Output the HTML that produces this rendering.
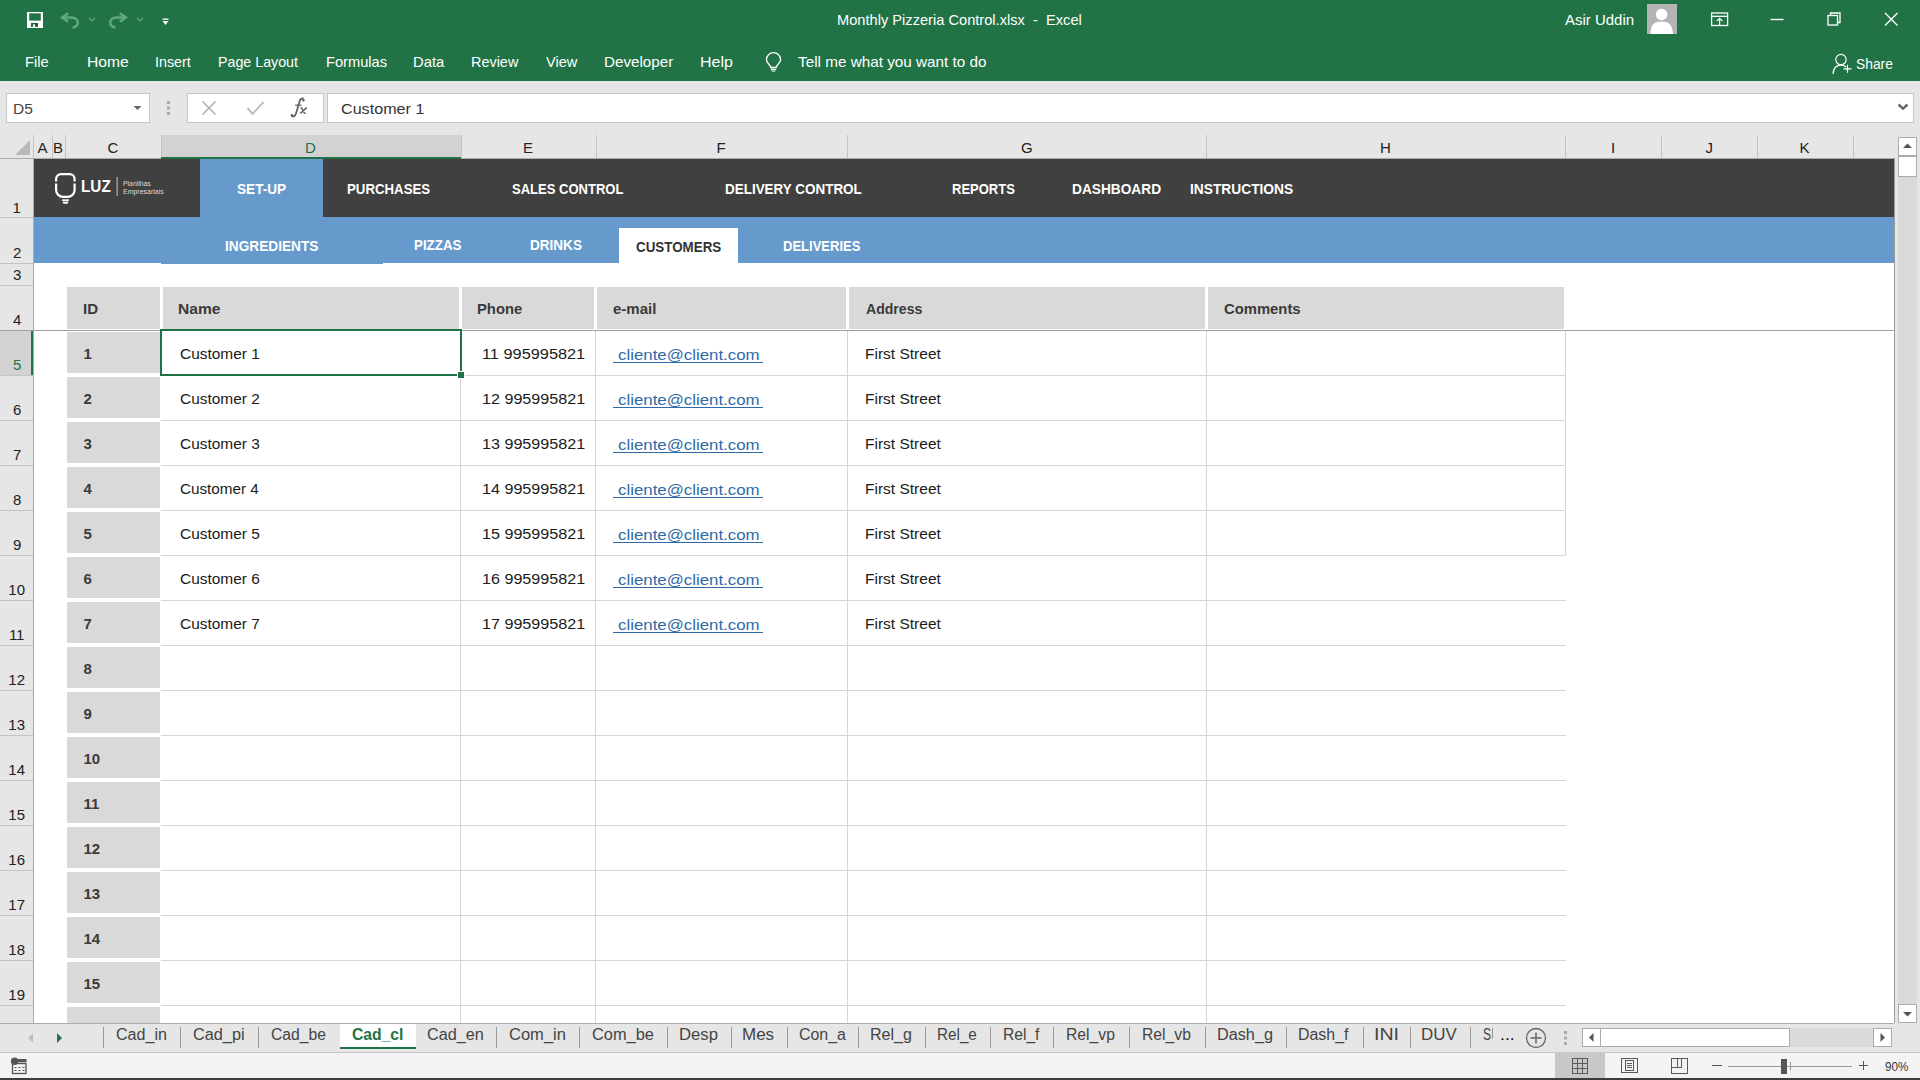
<!DOCTYPE html>
<html><head><meta charset="utf-8"><style>
html,body{margin:0;padding:0;width:1920px;height:1080px;overflow:hidden;background:#fff}
body{position:relative;font-family:"Liberation Sans", sans-serif}
div,svg{position:absolute}
span{position:absolute;white-space:pre;display:block}
</style></head><body>
<div style="left:0px;top:0px;width:1920px;height:81px;background:#217346;"></div>
<div style="left:0px;top:81px;width:1920px;height:54px;background:#e6e6e6;"></div>
<div style="left:6px;top:93px;width:144px;height:30px;background:#ffffff;box-sizing:border-box;border:1px solid #c6c6c6"></div>
<div style="left:187px;top:93px;width:137px;height:30px;background:#ffffff;box-sizing:border-box;border:1px solid #c6c6c6"></div>
<div style="left:327px;top:93px;width:1587px;height:30px;background:#ffffff;box-sizing:border-box;border:1px solid #c6c6c6"></div>
<div style="left:0px;top:135px;width:1894px;height:24px;background:#e6e6e6;"></div>
<div style="left:0px;top:158px;width:33px;height:865px;background:#e6e6e6;"></div>
<div style="left:161px;top:135px;width:300px;height:23px;background:#d2d2d2;"></div>
<div style="left:33px;top:135px;width:1px;height:23px;background:#c4c4c4;"></div>
<div style="left:52px;top:135px;width:1px;height:23px;background:#c4c4c4;"></div>
<div style="left:65px;top:135px;width:1px;height:23px;background:#c4c4c4;"></div>
<div style="left:161px;top:135px;width:1px;height:23px;background:#c4c4c4;"></div>
<div style="left:461px;top:135px;width:1px;height:23px;background:#c4c4c4;"></div>
<div style="left:596px;top:135px;width:1px;height:23px;background:#c4c4c4;"></div>
<div style="left:847px;top:135px;width:1px;height:23px;background:#c4c4c4;"></div>
<div style="left:1206px;top:135px;width:1px;height:23px;background:#c4c4c4;"></div>
<div style="left:1565px;top:135px;width:1px;height:23px;background:#c4c4c4;"></div>
<div style="left:1661px;top:135px;width:1px;height:23px;background:#c4c4c4;"></div>
<div style="left:1757px;top:135px;width:1px;height:23px;background:#c4c4c4;"></div>
<div style="left:1853px;top:135px;width:1px;height:23px;background:#c4c4c4;"></div>
<div style="left:0px;top:158px;width:33px;height:1px;background:#ababab;"></div>
<svg style="position:absolute;left:14px;top:139px" width="17" height="17"><polygon points="16,1 16,16 1,16" fill="#b9b9b9"/></svg>
<div style="left:33px;top:159px;width:1861px;height:864px;background:#ffffff;"></div>
<div style="left:33px;top:158px;width:1861px;height:1px;background:#ababab;"></div>
<div style="left:161px;top:157px;width:300px;height:2px;background:#217346;"></div>
<div style="left:33px;top:159px;width:1861px;height:58px;background:#404040;"></div>
<div style="left:200px;top:159px;width:123px;height:58px;background:#6699cc;"></div>
<div style="left:33px;top:217px;width:1861px;height:46px;background:#6699cc;"></div>
<div style="left:619px;top:228px;width:119px;height:35px;background:#ffffff;"></div>
<div style="left:161px;top:263px;width:222px;height:1px;background:#6699cc;"></div>
<div style="left:33px;top:158px;width:1px;height:865px;background:#ababab;"></div>
<div style="left:0px;top:330px;width:33px;height:45px;background:#d2d2d2;"></div>
<div style="left:31px;top:330px;width:2px;height:45px;background:#217346;"></div>
<div style="left:0px;top:217px;width:33px;height:1px;background:#c4c4c4;"></div>
<div style="left:0px;top:263px;width:33px;height:1px;background:#c4c4c4;"></div>
<div style="left:0px;top:285px;width:33px;height:1px;background:#c4c4c4;"></div>
<div style="left:0px;top:330px;width:33px;height:1px;background:#c4c4c4;"></div>
<div style="left:0px;top:375px;width:33px;height:1px;background:#c4c4c4;"></div>
<div style="left:0px;top:420px;width:33px;height:1px;background:#c4c4c4;"></div>
<div style="left:0px;top:465px;width:33px;height:1px;background:#c4c4c4;"></div>
<div style="left:0px;top:510px;width:33px;height:1px;background:#c4c4c4;"></div>
<div style="left:0px;top:555px;width:33px;height:1px;background:#c4c4c4;"></div>
<div style="left:0px;top:600px;width:33px;height:1px;background:#c4c4c4;"></div>
<div style="left:0px;top:645px;width:33px;height:1px;background:#c4c4c4;"></div>
<div style="left:0px;top:690px;width:33px;height:1px;background:#c4c4c4;"></div>
<div style="left:0px;top:735px;width:33px;height:1px;background:#c4c4c4;"></div>
<div style="left:0px;top:780px;width:33px;height:1px;background:#c4c4c4;"></div>
<div style="left:0px;top:825px;width:33px;height:1px;background:#c4c4c4;"></div>
<div style="left:0px;top:870px;width:33px;height:1px;background:#c4c4c4;"></div>
<div style="left:0px;top:915px;width:33px;height:1px;background:#c4c4c4;"></div>
<div style="left:0px;top:960px;width:33px;height:1px;background:#c4c4c4;"></div>
<div style="left:0px;top:1005px;width:33px;height:1px;background:#c4c4c4;"></div>
<div style="left:0px;top:1050px;width:33px;height:1px;background:#c4c4c4;"></div>
<svg style="position:absolute;left:50px;top:168px" width="120" height="42" viewBox="0 0 120 42">
<path d="M6.1 13.4 V11.1 a5 5 0 0 1 5 -5 h8.5 a5 5 0 0 1 5 5 V13.4 M6.1 15.6 V21.9 a7 7 0 0 0 7 7 h4.5 a7 7 0 0 0 7 -7 V15.6" fill="none" stroke="#fff" stroke-width="2.2"/>
<rect x="12.2" y="31.3" width="6.6" height="1.8" fill="#fff"/><path d="M12.6 33.8 h5.8 l-0.8 2 h-4.2 z" fill="#fff"/>
<rect x="66.5" y="9" width="1.3" height="19" fill="#aaa"/>
</svg>
<div style="left:67px;top:287px;width:93px;height:42px;background:#d9d9d9;"></div>
<div style="left:163px;top:287px;width:296px;height:42px;background:#d9d9d9;"></div>
<div style="left:462px;top:287px;width:132px;height:42px;background:#d9d9d9;"></div>
<div style="left:597px;top:287px;width:249px;height:42px;background:#d9d9d9;"></div>
<div style="left:849px;top:287px;width:356px;height:42px;background:#d9d9d9;"></div>
<div style="left:1208px;top:287px;width:356px;height:42px;background:#d9d9d9;"></div>
<div style="left:0px;top:330px;width:1894px;height:1px;background:#a0a0a0;"></div>
<div style="left:67px;top:332px;width:93px;height:41.4px;background:#d9d9d9;"></div>
<div style="left:161px;top:375px;width:1405px;height:1px;background:#d6d6d6;"></div>
<div style="left:613px;top:362px;width:150px;height:1px;background:#2f6aa8;"></div>
<div style="left:67px;top:377px;width:93px;height:41.4px;background:#d9d9d9;"></div>
<div style="left:161px;top:420px;width:1405px;height:1px;background:#d6d6d6;"></div>
<div style="left:613px;top:407px;width:150px;height:1px;background:#2f6aa8;"></div>
<div style="left:67px;top:422px;width:93px;height:41.4px;background:#d9d9d9;"></div>
<div style="left:161px;top:465px;width:1405px;height:1px;background:#d6d6d6;"></div>
<div style="left:613px;top:452px;width:150px;height:1px;background:#2f6aa8;"></div>
<div style="left:67px;top:467px;width:93px;height:41.4px;background:#d9d9d9;"></div>
<div style="left:161px;top:510px;width:1405px;height:1px;background:#d6d6d6;"></div>
<div style="left:613px;top:497px;width:150px;height:1px;background:#2f6aa8;"></div>
<div style="left:67px;top:512px;width:93px;height:41.4px;background:#d9d9d9;"></div>
<div style="left:161px;top:555px;width:1405px;height:1px;background:#d6d6d6;"></div>
<div style="left:613px;top:542px;width:150px;height:1px;background:#2f6aa8;"></div>
<div style="left:67px;top:557px;width:93px;height:41.4px;background:#d9d9d9;"></div>
<div style="left:161px;top:600px;width:1405px;height:1px;background:#d6d6d6;"></div>
<div style="left:613px;top:587px;width:150px;height:1px;background:#2f6aa8;"></div>
<div style="left:67px;top:602px;width:93px;height:41.4px;background:#d9d9d9;"></div>
<div style="left:161px;top:645px;width:1405px;height:1px;background:#d6d6d6;"></div>
<div style="left:613px;top:632px;width:150px;height:1px;background:#2f6aa8;"></div>
<div style="left:67px;top:647px;width:93px;height:41.4px;background:#d9d9d9;"></div>
<div style="left:161px;top:690px;width:1405px;height:1px;background:#d6d6d6;"></div>
<div style="left:67px;top:692px;width:93px;height:41.4px;background:#d9d9d9;"></div>
<div style="left:161px;top:735px;width:1405px;height:1px;background:#d6d6d6;"></div>
<div style="left:67px;top:737px;width:93px;height:41.4px;background:#d9d9d9;"></div>
<div style="left:161px;top:780px;width:1405px;height:1px;background:#d6d6d6;"></div>
<div style="left:67px;top:782px;width:93px;height:41.4px;background:#d9d9d9;"></div>
<div style="left:161px;top:825px;width:1405px;height:1px;background:#d6d6d6;"></div>
<div style="left:67px;top:827px;width:93px;height:41.4px;background:#d9d9d9;"></div>
<div style="left:161px;top:870px;width:1405px;height:1px;background:#d6d6d6;"></div>
<div style="left:67px;top:872px;width:93px;height:41.4px;background:#d9d9d9;"></div>
<div style="left:161px;top:915px;width:1405px;height:1px;background:#d6d6d6;"></div>
<div style="left:67px;top:917px;width:93px;height:41.4px;background:#d9d9d9;"></div>
<div style="left:161px;top:960px;width:1405px;height:1px;background:#d6d6d6;"></div>
<div style="left:67px;top:962px;width:93px;height:41.4px;background:#d9d9d9;"></div>
<div style="left:161px;top:1005px;width:1405px;height:1px;background:#d6d6d6;"></div>
<div style="left:67px;top:1007px;width:93px;height:41.4px;background:#d9d9d9;"></div>
<div style="left:161px;top:1050px;width:1405px;height:1px;background:#d6d6d6;"></div>
<div style="left:460px;top:331px;width:1px;height:692px;background:#d6d6d6;"></div>
<div style="left:595px;top:331px;width:1px;height:692px;background:#d6d6d6;"></div>
<div style="left:847px;top:331px;width:1px;height:692px;background:#d6d6d6;"></div>
<div style="left:1206px;top:331px;width:1px;height:692px;background:#d6d6d6;"></div>
<div style="left:1565px;top:331px;width:1px;height:225px;background:#d6d6d6;"></div>
<div style="left:160px;top:329px;width:302px;height:47px;box-sizing:border-box;border:2px solid #217346"></div>
<div style="left:458px;top:372px;width:6px;height:6px;background:#217346;border:1px solid #fff;box-sizing:content-box;left:457px;top:371px"></div>
<div style="left:1894px;top:135px;width:26px;height:888px;background:#e6e6e6;"></div>
<div style="left:1894px;top:158px;width:1px;height:865px;background:#9c9c9c;"></div>
<div style="left:1898px;top:137px;width:19px;height:870px;background:#dadada;"></div>
<div style="left:1898px;top:137px;width:19px;height:19px;background:#ffffff;box-sizing:border-box;border:1px solid #ababab"></div>
<svg style="position:absolute;left:1898px;top:137px" width="19" height="19"><polygon points="5,11 9.5,6.5 14,11" fill="#555"/></svg>
<div style="left:1898px;top:156px;width:19px;height:21px;background:#ffffff;box-sizing:border-box;border:1px solid #ababab"></div>
<div style="left:1898px;top:1004px;width:19px;height:19px;background:#ffffff;box-sizing:border-box;border:1px solid #ababab"></div>
<svg style="position:absolute;left:1898px;top:1004px" width="19" height="19"><polygon points="5,8 14,8 9.5,12.5" fill="#555"/></svg>
<div style="left:0px;top:1023px;width:1920px;height:29px;background:#e6e6e6;"></div>
<div style="left:0px;top:1023px;width:1894px;height:1px;background:#ababab;"></div>
<div style="left:0px;top:1052px;width:1920px;height:1px;background:#c6c6c6;"></div>
<svg style="position:absolute;left:25px;top:1030px" width="45" height="16"><polygon points="8,3 3,8 8,13" fill="#c0c0c0"/><polygon points="32,3 37,8 32,13" fill="#217346"/></svg>
<div style="left:103px;top:1027px;width:1px;height:21px;background:#9a9a9a;"></div>
<div style="left:180px;top:1027px;width:1px;height:21px;background:#9a9a9a;"></div>
<div style="left:258px;top:1027px;width:1px;height:21px;background:#9a9a9a;"></div>
<div style="left:496px;top:1027px;width:1px;height:21px;background:#9a9a9a;"></div>
<div style="left:579px;top:1027px;width:1px;height:21px;background:#9a9a9a;"></div>
<div style="left:667px;top:1027px;width:1px;height:21px;background:#9a9a9a;"></div>
<div style="left:731px;top:1027px;width:1px;height:21px;background:#9a9a9a;"></div>
<div style="left:787px;top:1027px;width:1px;height:21px;background:#9a9a9a;"></div>
<div style="left:858px;top:1027px;width:1px;height:21px;background:#9a9a9a;"></div>
<div style="left:925px;top:1027px;width:1px;height:21px;background:#9a9a9a;"></div>
<div style="left:990px;top:1027px;width:1px;height:21px;background:#9a9a9a;"></div>
<div style="left:1053px;top:1027px;width:1px;height:21px;background:#9a9a9a;"></div>
<div style="left:1129px;top:1027px;width:1px;height:21px;background:#9a9a9a;"></div>
<div style="left:1205px;top:1027px;width:1px;height:21px;background:#9a9a9a;"></div>
<div style="left:1286px;top:1027px;width:1px;height:21px;background:#9a9a9a;"></div>
<div style="left:1363px;top:1027px;width:1px;height:21px;background:#9a9a9a;"></div>
<div style="left:1410px;top:1027px;width:1px;height:21px;background:#9a9a9a;"></div>
<div style="left:1470px;top:1027px;width:1px;height:21px;background:#9a9a9a;"></div>
<div style="left:340px;top:1024px;width:76px;height:25px;background:#ffffff;"></div>
<div style="left:340px;top:1047px;width:76px;height:2px;background:#217346;"></div>
<div style="left:1492px;top:1028px;width:1px;height:11px;background:#a09080;"></div>
<svg style="position:absolute;left:1525px;top:1027px" width="22" height="22"><circle cx="11" cy="11" r="9.5" fill="none" stroke="#666" stroke-width="1.3"/><path d="M11 5.5v11M5.5 11h11" stroke="#666" stroke-width="1.5"/></svg>
<svg style="position:absolute;left:1563px;top:1030px" width="5" height="16"><rect x="1" y="1" width="3" height="3" fill="#aaa"/><rect x="1" y="6.5" width="3" height="3" fill="#aaa"/><rect x="1" y="12" width="3" height="3" fill="#aaa"/></svg>
<div style="left:1582px;top:1028px;width:310px;height:19px;background:#dadada;"></div>
<div style="left:1582px;top:1028px;width:19px;height:19px;background:#ffffff;box-sizing:border-box;border:1px solid #ababab"></div>
<div style="left:1600px;top:1028px;width:190px;height:19px;background:#ffffff;box-sizing:border-box;border:1px solid #ababab"></div>
<div style="left:1873px;top:1028px;width:19px;height:19px;background:#ffffff;box-sizing:border-box;border:1px solid #ababab"></div>
<svg style="position:absolute;left:1582px;top:1028px" width="19" height="19"><polygon points="11.5,5 7,9.5 11.5,14" fill="#555"/></svg>
<svg style="position:absolute;left:1873px;top:1028px" width="19" height="19"><polygon points="7.5,5 12,9.5 7.5,14" fill="#555"/></svg>
<div style="left:0px;top:1053px;width:1920px;height:25px;background:#f3f3f3;"></div>
<div style="left:0px;top:1078px;width:1920px;height:2px;background:#3c3c3c;"></div>
<div style="left:1555px;top:1053px;width:50px;height:25px;background:#c8c8c8;"></div>
<svg style="position:absolute;left:10px;top:1056px" width="18" height="19"><rect x="2.5" y="7.5" width="13.5" height="10" fill="none" stroke="#555" stroke-width="1.3"/><rect x="8" y="3" width="8.5" height="3.2" fill="#555"/><circle cx="4.6" cy="5.3" r="3.7" fill="#555"/><path d="M4.5 11.5h2M8.5 11.5h2M12.5 11.5h2M4.5 14.5h2M8.5 14.5h2M12.5 14.5h2" stroke="#555" stroke-width="1.2"/></svg>
<svg style="position:absolute;left:1560px;top:1053px" width="140" height="25" shape-rendering="crispEdges"><g fill="none" stroke="#5a5a5a" stroke-width="1.2">
<path d="M12.5 5.5h15v15h-15z M17.5 5.5v15 M22.5 5.5v15 M12.5 10.5h15 M12.5 15.5h15"/>
<path d="M61.5 5.5h16v14h-16z M65.5 7.5h8v10h-8z M67 10.5h5 M67 12.5h5 M67 14.5h5"/>
<path d="M111.5 5.5h16v15h-16z M111.5 14.5h10v-9 M117.5 5.5v9"/>
</g></svg>
<div style="left:1712px;top:1065px;width:10px;height:1.3px;background:#555;"></div>
<div style="left:1728px;top:1066px;width:124px;height:1px;background:#999;"></div>
<div style="left:1781px;top:1059px;width:6px;height:15px;background:#555;"></div>
<div style="left:1790px;top:1062px;width:1px;height:8px;background:#999;"></div>
<div style="left:1859px;top:1065px;width:9px;height:1.3px;background:#555;"></div>
<div style="left:1863px;top:1061px;width:1.3px;height:9px;background:#555;"></div>
<svg style="position:absolute;left:0;top:0" width="200" height="40">
<path d="M27 12h16v16h-16z" fill="#fff"/><rect x="29.2" y="13.3" width="11.6" height="7.3" fill="#217346"/><rect x="31" y="23" width="7" height="3.8" fill="#1d5e3a"/><rect x="33" y="24.3" width="2" height="2.5" fill="#fff"/>
<g fill="none" stroke="#63a87f" stroke-width="2.5">
<path d="M62.5 17.5H71.5C75.5 17.5 77.8 19.8 77.8 22.5C77.8 25.2 76 27 72.5 27.6"/><path d="M68.2 13.2L62.2 17.5L68.2 21.8" stroke-linejoin="miter"/>
<path d="M125.5 17.5H116.5C112.5 17.5 110.2 19.8 110.2 22.5C110.2 25.2 112 27 115.5 27.6"/><path d="M119.8 13.2L125.8 17.5L119.8 21.8" stroke-linejoin="miter"/>
</g>
<path d="M89 18l3 3 3-3" fill="none" stroke="#63a87f" stroke-width="1.2"/>
<path d="M137 18l3 3 3-3" fill="none" stroke="#63a87f" stroke-width="1.2"/>
<rect x="162.5" y="18.5" width="6" height="1.3" fill="#fff"/><polygon points="162.5,21 168.5,21 165.5,25" fill="#fff"/>
</svg>
<svg style="position:absolute;left:1640px;top:0" width="280" height="40">
<rect x="7" y="4" width="30" height="30" fill="#b4b4b4"/>
<circle cx="21.6" cy="14.5" r="5.8" fill="#fff"/><path d="M10.5 34 C10.5 26 13 21.5 21.6 21.5 C30 21.5 32.5 26 33 34z" fill="#fff"/>
<rect x="71.6" y="13" width="16" height="12.5" fill="none" stroke="#fff" stroke-width="1.3"/><path d="M71 16.3h17" stroke="#fff" stroke-width="1.3"/><path d="M79.6 25V18.5M76.8 21.2l2.8-2.8 2.8 2.8" fill="none" stroke="#fff" stroke-width="1.2"/>
<path d="M130.5 19.5h13" stroke="#fff" stroke-width="1.4"/>
<rect x="188" y="15.5" width="9.5" height="9.5" fill="none" stroke="#fff" stroke-width="1.3"/><path d="M190.5 15.5v-2.5h9.5v9.5h-2.5" fill="none" stroke="#fff" stroke-width="1.3"/>
<path d="M245 13l12.5 12.5M257.5 13l-12.5 12.5" stroke="#fff" stroke-width="1.4"/>
</svg>
<svg style="position:absolute;left:760px;top:48px" width="30" height="28">
<path d="M10.8 19.5 C10.8 17 6.4 15.2 6.4 11.7 A7.1 7.1 0 0 1 20.6 11.7 C20.6 15.2 16.2 17 16.2 19.5z" fill="none" stroke="#fff" stroke-width="1.3"/>
<path d="M10.8 21.3h5.4M11.6 23h3.8" stroke="#fff" stroke-width="1.2"/>
</svg>
<svg style="position:absolute;left:1831px;top:52px" width="24" height="24">
<circle cx="10" cy="7.6" r="5.2" fill="none" stroke="#fff" stroke-width="1.2"/><path d="M2 22 C2.5 16 5.5 13.2 10 13.2 C12.5 13.2 14 14 15 15" fill="none" stroke="#fff" stroke-width="1.2"/><path d="M16.5 12.8v8M12.5 16.8h8" stroke="#fff" stroke-width="1.2"/>
</svg>
<svg style="position:absolute;left:120px;top:85px" width="200" height="40">
<polygon points="13.5,21 21.5,21 17.5,25" fill="#666"/>
<rect x="47" y="16" width="3" height="3" fill="#aaa"/><rect x="47" y="21.5" width="3" height="3" fill="#aaa"/><rect x="47" y="27" width="3" height="3" fill="#aaa"/>
<path d="M82.5 16.5l13 13M95.5 16.5l-13 13" stroke="#b0b0b0" stroke-width="1.6"/>
<path d="M127.5 23l5 6 11-12" fill="none" stroke="#c0c0c0" stroke-width="2"/>
</svg>
<svg style="position:absolute;left:285px;top:95px" width="30" height="25"><g fill="none" stroke="#5c5c5c">
<path d="M6.5 20.3C7.6 22.3 10 21.9 11 18.5L14.8 5.8C15.4 3.8 16.8 3 18.6 3.6" stroke-width="1.7"/>
<path d="M10.2 10.2H16.6" stroke-width="1.2"/>
<path d="M15.5 12.4C16.5 12.4 17 13 17.5 14.5L19 17.5C19.4 18.3 20 18.4 20.6 18.2M21.8 12.6L15.2 18.5" stroke-width="1.5"/>
</g><circle cx="18.4" cy="5.2" r="1.2" fill="#5c5c5c"/><circle cx="7" cy="20.3" r="1.2" fill="#5c5c5c"/></svg>
<svg style="position:absolute;left:1896px;top:102px" width="14" height="10"><path d="M2.5 2.5l4.5 4.2 4.5-4.2" fill="none" stroke="#666" stroke-width="2.4"/></svg>
<span style="left:836.52px;top:12.10px;font-size:15px;line-height:15px;color:#ffffff;font-weight:400;transform:scaleX(0.9757);transform-origin:0 0;">Monthly Pizzeria Control.xlsx  -  Excel</span>
<span style="left:1565.00px;top:12.30px;font-size:15px;line-height:15px;color:#ffffff;font-weight:400;transform:scaleX(0.9986);transform-origin:0 0;">Asir Uddin</span>
<span style="left:24.63px;top:54.30px;font-size:15px;line-height:15px;color:#ffffff;font-weight:400;transform:scaleX(0.9725);transform-origin:0 0;">File</span>
<span style="left:87.36px;top:54.30px;font-size:15px;line-height:15px;color:#ffffff;font-weight:400;transform:scaleX(1.0447);transform-origin:0 0;">Home</span>
<span style="left:155.35px;top:54.30px;font-size:15px;line-height:15px;color:#ffffff;font-weight:400;transform:scaleX(0.9532);transform-origin:0 0;">Insert</span>
<span style="left:218.25px;top:54.30px;font-size:15px;line-height:15px;color:#ffffff;font-weight:400;transform:scaleX(0.9492);transform-origin:0 0;">Page Layout</span>
<span style="left:325.52px;top:54.30px;font-size:15px;line-height:15px;color:#ffffff;font-weight:400;transform:scaleX(0.9752);transform-origin:0 0;">Formulas</span>
<span style="left:412.71px;top:54.30px;font-size:15px;line-height:15px;color:#ffffff;font-weight:400;transform:scaleX(0.9859);transform-origin:0 0;">Data</span>
<span style="left:471.34px;top:54.30px;font-size:15px;line-height:15px;color:#ffffff;font-weight:400;transform:scaleX(0.9617);transform-origin:0 0;">Review</span>
<span style="left:546.00px;top:54.30px;font-size:15px;line-height:15px;color:#ffffff;font-weight:400;transform:scaleX(0.9720);transform-origin:0 0;">View</span>
<span style="left:604.29px;top:54.30px;font-size:15px;line-height:15px;color:#ffffff;font-weight:400;transform:scaleX(1.0122);transform-origin:0 0;">Developer</span>
<span style="left:700.23px;top:54.30px;font-size:15px;line-height:15px;color:#ffffff;font-weight:400;transform:scaleX(1.0675);transform-origin:0 0;">Help</span>
<span style="left:797.60px;top:54.30px;font-size:15px;line-height:15px;color:#ffffff;font-weight:400;transform:scaleX(1.0186);transform-origin:0 0;">Tell me what you want to do</span>
<span style="left:1855.50px;top:55.80px;font-size:15px;line-height:15px;color:#ffffff;font-weight:400;transform:scaleX(0.9198);transform-origin:0 0;">Share</span>
<span style="left:12.96px;top:100.80px;font-size:15px;line-height:15px;color:#444444;font-weight:400;transform:scaleX(1.0374);transform-origin:0 0;">D5</span>
<span style="left:341.25px;top:100.80px;font-size:15px;line-height:15px;color:#333333;font-weight:400;transform:scaleX(1.0753);transform-origin:0 0;">Customer 1</span>
<span style="left:37.50px;top:140.10px;font-size:15px;line-height:15px;color:#222222;font-weight:400;">A</span>
<span style="left:53.00px;top:140.10px;font-size:15px;line-height:15px;color:#222222;font-weight:400;">B</span>
<span style="left:107.50px;top:140.10px;font-size:15px;line-height:15px;color:#222222;font-weight:400;">C</span>
<span style="left:305.00px;top:140.10px;font-size:15px;line-height:15px;color:#217346;font-weight:400;">D</span>
<span style="left:523.00px;top:140.10px;font-size:15px;line-height:15px;color:#222222;font-weight:400;">E</span>
<span style="left:716.50px;top:140.10px;font-size:15px;line-height:15px;color:#222222;font-weight:400;">F</span>
<span style="left:1021.00px;top:140.10px;font-size:15px;line-height:15px;color:#222222;font-weight:400;">G</span>
<span style="left:1380.00px;top:140.10px;font-size:15px;line-height:15px;color:#222222;font-weight:400;">H</span>
<span style="left:1611.00px;top:140.10px;font-size:15px;line-height:15px;color:#222222;font-weight:400;">I</span>
<span style="left:1705.50px;top:140.10px;font-size:15px;line-height:15px;color:#222222;font-weight:400;">J</span>
<span style="left:1799.50px;top:140.10px;font-size:15px;line-height:15px;color:#222222;font-weight:400;">K</span>
<span style="left:12.50px;top:199.80px;font-size:15px;line-height:15px;color:#222222;font-weight:400;">1</span>
<span style="left:13.00px;top:244.80px;font-size:15px;line-height:15px;color:#222222;font-weight:400;">2</span>
<span style="left:13.00px;top:266.80px;font-size:15px;line-height:15px;color:#222222;font-weight:400;">3</span>
<span style="left:13.00px;top:311.80px;font-size:15px;line-height:15px;color:#222222;font-weight:400;">4</span>
<span style="left:13.00px;top:356.80px;font-size:15px;line-height:15px;color:#217346;font-weight:400;">5</span>
<span style="left:13.00px;top:401.80px;font-size:15px;line-height:15px;color:#222222;font-weight:400;">6</span>
<span style="left:13.00px;top:446.80px;font-size:15px;line-height:15px;color:#222222;font-weight:400;">7</span>
<span style="left:13.00px;top:491.80px;font-size:15px;line-height:15px;color:#222222;font-weight:400;">8</span>
<span style="left:13.00px;top:536.80px;font-size:15px;line-height:15px;color:#222222;font-weight:400;">9</span>
<span style="left:8.33px;top:581.80px;font-size:15px;line-height:15px;color:#222222;font-weight:400;">10</span>
<span style="left:8.89px;top:626.80px;font-size:15px;line-height:15px;color:#222222;font-weight:400;">11</span>
<span style="left:8.33px;top:671.80px;font-size:15px;line-height:15px;color:#222222;font-weight:400;">12</span>
<span style="left:8.33px;top:716.80px;font-size:15px;line-height:15px;color:#222222;font-weight:400;">13</span>
<span style="left:8.33px;top:761.80px;font-size:15px;line-height:15px;color:#222222;font-weight:400;">14</span>
<span style="left:8.33px;top:806.80px;font-size:15px;line-height:15px;color:#222222;font-weight:400;">15</span>
<span style="left:8.33px;top:851.80px;font-size:15px;line-height:15px;color:#222222;font-weight:400;">16</span>
<span style="left:8.33px;top:896.80px;font-size:15px;line-height:15px;color:#222222;font-weight:400;">17</span>
<span style="left:8.33px;top:941.80px;font-size:15px;line-height:15px;color:#222222;font-weight:400;">18</span>
<span style="left:8.33px;top:986.80px;font-size:15px;line-height:15px;color:#222222;font-weight:400;">19</span>
<span style="left:236.60px;top:181.18px;font-size:15.5px;line-height:15.5px;color:#ffffff;font-weight:700;transform:scaleX(0.8788);transform-origin:0 0;">SET-UP</span>
<span style="left:347.45px;top:181.18px;font-size:15.5px;line-height:15.5px;color:#ffffff;font-weight:700;transform:scaleX(0.8543);transform-origin:0 0;">PURCHASES</span>
<span style="left:512.00px;top:181.18px;font-size:15.5px;line-height:15.5px;color:#ffffff;font-weight:700;transform:scaleX(0.8400);transform-origin:0 0;">SALES CONTROL</span>
<span style="left:724.63px;top:181.18px;font-size:15.5px;line-height:15.5px;color:#ffffff;font-weight:700;transform:scaleX(0.8679);transform-origin:0 0;">DELIVERY CONTROL</span>
<span style="left:951.66px;top:181.18px;font-size:15.5px;line-height:15.5px;color:#ffffff;font-weight:700;transform:scaleX(0.8391);transform-origin:0 0;">REPORTS</span>
<span style="left:1071.62px;top:181.18px;font-size:15.5px;line-height:15.5px;color:#ffffff;font-weight:700;transform:scaleX(0.8839);transform-origin:0 0;">DASHBOARD</span>
<span style="left:1189.61px;top:181.18px;font-size:15.5px;line-height:15.5px;color:#ffffff;font-weight:700;transform:scaleX(0.8876);transform-origin:0 0;">INSTRUCTIONS</span>
<span style="left:225.42px;top:238.48px;font-size:15.5px;line-height:15.5px;color:#ffffff;font-weight:700;transform:scaleX(0.8816);transform-origin:0 0;">INGREDIENTS</span>
<span style="left:413.64px;top:236.88px;font-size:15.5px;line-height:15.5px;color:#ffffff;font-weight:700;transform:scaleX(0.8601);transform-origin:0 0;">PIZZAS</span>
<span style="left:529.63px;top:236.88px;font-size:15.5px;line-height:15.5px;color:#ffffff;font-weight:700;transform:scaleX(0.8738);transform-origin:0 0;">DRINKS</span>
<span style="left:636.25px;top:238.58px;font-size:15.5px;line-height:15.5px;color:#333333;font-weight:700;transform:scaleX(0.8637);transform-origin:0 0;">CUSTOMERS</span>
<span style="left:783.41px;top:238.18px;font-size:15.5px;line-height:15.5px;color:#ffffff;font-weight:700;transform:scaleX(0.8396);transform-origin:0 0;">DELIVERIES</span>
<span style="left:81.04px;top:179.45px;font-size:16px;line-height:16px;color:#ffffff;font-weight:700;transform:scaleX(0.9562);transform-origin:0 0;">LUZ</span>
<span style="left:122.50px;top:179.95px;font-size:7.5px;line-height:7.5px;color:#dddddd;font-weight:400;transform:scaleX(0.9125);transform-origin:0 0;">Planilhas</span>
<span style="left:122.50px;top:187.65px;font-size:7.5px;line-height:7.5px;color:#dddddd;font-weight:400;transform:scaleX(0.9316);transform-origin:0 0;">Empresariais</span>
<span style="left:83.09px;top:300.70px;font-size:15px;line-height:15px;color:#3a3a3a;font-weight:700;transform:scaleX(1.0094);transform-origin:0 0;">ID</span>
<span style="left:178.46px;top:300.70px;font-size:15px;line-height:15px;color:#3a3a3a;font-weight:700;transform:scaleX(1.0377);transform-origin:0 0;">Name</span>
<span style="left:477.41px;top:300.70px;font-size:15px;line-height:15px;color:#3a3a3a;font-weight:700;transform:scaleX(0.9867);transform-origin:0 0;">Phone</span>
<span style="left:613.25px;top:300.70px;font-size:15px;line-height:15px;color:#3a3a3a;font-weight:700;transform:scaleX(1.0015);transform-origin:0 0;">e-mail</span>
<span style="left:865.75px;top:300.70px;font-size:15px;line-height:15px;color:#3a3a3a;font-weight:700;transform:scaleX(0.9383);transform-origin:0 0;">Address</span>
<span style="left:1224.25px;top:300.70px;font-size:15px;line-height:15px;color:#3a3a3a;font-weight:700;transform:scaleX(0.9881);transform-origin:0 0;">Comments</span>
<span style="left:83.50px;top:346.10px;font-size:15px;line-height:15px;color:#3a3a3a;font-weight:700;">1</span>
<span style="left:179.60px;top:346.38px;font-size:15.5px;line-height:15.5px;color:#1a1a1a;font-weight:400;transform:scaleX(0.9963);transform-origin:0 0;">Customer 1</span>
<span style="left:481.95px;top:346.38px;font-size:15.5px;line-height:15.5px;color:#1a1a1a;font-weight:400;transform:scaleX(1.0533);transform-origin:0 0;">11 995995821</span>
<span style="left:617.80px;top:346.88px;font-size:15.5px;line-height:15.5px;color:#2f6aa8;font-weight:400;transform:scaleX(1.0866);transform-origin:0 0;">cliente@client.com</span>
<span style="left:864.75px;top:346.38px;font-size:15.5px;line-height:15.5px;color:#1a1a1a;font-weight:400;transform:scaleX(1.0002);transform-origin:0 0;">First Street</span>
<span style="left:83.50px;top:391.10px;font-size:15px;line-height:15px;color:#3a3a3a;font-weight:700;">2</span>
<span style="left:179.60px;top:391.38px;font-size:15.5px;line-height:15.5px;color:#1a1a1a;font-weight:400;transform:scaleX(0.9963);transform-origin:0 0;">Customer 2</span>
<span style="left:481.96px;top:391.38px;font-size:15.5px;line-height:15.5px;color:#1a1a1a;font-weight:400;transform:scaleX(1.0409);transform-origin:0 0;">12 995995821</span>
<span style="left:617.80px;top:391.88px;font-size:15.5px;line-height:15.5px;color:#2f6aa8;font-weight:400;transform:scaleX(1.0866);transform-origin:0 0;">cliente@client.com</span>
<span style="left:864.75px;top:391.38px;font-size:15.5px;line-height:15.5px;color:#1a1a1a;font-weight:400;transform:scaleX(1.0002);transform-origin:0 0;">First Street</span>
<span style="left:83.50px;top:436.10px;font-size:15px;line-height:15px;color:#3a3a3a;font-weight:700;">3</span>
<span style="left:179.60px;top:436.38px;font-size:15.5px;line-height:15.5px;color:#1a1a1a;font-weight:400;transform:scaleX(0.9963);transform-origin:0 0;">Customer 3</span>
<span style="left:481.96px;top:436.38px;font-size:15.5px;line-height:15.5px;color:#1a1a1a;font-weight:400;transform:scaleX(1.0409);transform-origin:0 0;">13 995995821</span>
<span style="left:617.80px;top:436.88px;font-size:15.5px;line-height:15.5px;color:#2f6aa8;font-weight:400;transform:scaleX(1.0866);transform-origin:0 0;">cliente@client.com</span>
<span style="left:864.75px;top:436.38px;font-size:15.5px;line-height:15.5px;color:#1a1a1a;font-weight:400;transform:scaleX(1.0002);transform-origin:0 0;">First Street</span>
<span style="left:83.50px;top:481.10px;font-size:15px;line-height:15px;color:#3a3a3a;font-weight:700;">4</span>
<span style="left:179.60px;top:481.38px;font-size:15.5px;line-height:15.5px;color:#1a1a1a;font-weight:400;transform:scaleX(0.9840);transform-origin:0 0;">Customer 4</span>
<span style="left:481.96px;top:481.38px;font-size:15.5px;line-height:15.5px;color:#1a1a1a;font-weight:400;transform:scaleX(1.0409);transform-origin:0 0;">14 995995821</span>
<span style="left:617.80px;top:481.88px;font-size:15.5px;line-height:15.5px;color:#2f6aa8;font-weight:400;transform:scaleX(1.0866);transform-origin:0 0;">cliente@client.com</span>
<span style="left:864.75px;top:481.38px;font-size:15.5px;line-height:15.5px;color:#1a1a1a;font-weight:400;transform:scaleX(1.0002);transform-origin:0 0;">First Street</span>
<span style="left:83.50px;top:526.10px;font-size:15px;line-height:15px;color:#3a3a3a;font-weight:700;">5</span>
<span style="left:179.60px;top:526.38px;font-size:15.5px;line-height:15.5px;color:#1a1a1a;font-weight:400;transform:scaleX(0.9963);transform-origin:0 0;">Customer 5</span>
<span style="left:481.96px;top:526.38px;font-size:15.5px;line-height:15.5px;color:#1a1a1a;font-weight:400;transform:scaleX(1.0409);transform-origin:0 0;">15 995995821</span>
<span style="left:617.80px;top:526.88px;font-size:15.5px;line-height:15.5px;color:#2f6aa8;font-weight:400;transform:scaleX(1.0866);transform-origin:0 0;">cliente@client.com</span>
<span style="left:864.75px;top:526.38px;font-size:15.5px;line-height:15.5px;color:#1a1a1a;font-weight:400;transform:scaleX(1.0002);transform-origin:0 0;">First Street</span>
<span style="left:83.50px;top:571.10px;font-size:15px;line-height:15px;color:#3a3a3a;font-weight:700;">6</span>
<span style="left:179.60px;top:571.38px;font-size:15.5px;line-height:15.5px;color:#1a1a1a;font-weight:400;transform:scaleX(0.9963);transform-origin:0 0;">Customer 6</span>
<span style="left:481.96px;top:571.38px;font-size:15.5px;line-height:15.5px;color:#1a1a1a;font-weight:400;transform:scaleX(1.0409);transform-origin:0 0;">16 995995821</span>
<span style="left:617.80px;top:571.88px;font-size:15.5px;line-height:15.5px;color:#2f6aa8;font-weight:400;transform:scaleX(1.0866);transform-origin:0 0;">cliente@client.com</span>
<span style="left:864.75px;top:571.38px;font-size:15.5px;line-height:15.5px;color:#1a1a1a;font-weight:400;transform:scaleX(1.0002);transform-origin:0 0;">First Street</span>
<span style="left:83.50px;top:616.10px;font-size:15px;line-height:15px;color:#3a3a3a;font-weight:700;">7</span>
<span style="left:179.60px;top:616.38px;font-size:15.5px;line-height:15.5px;color:#1a1a1a;font-weight:400;transform:scaleX(0.9963);transform-origin:0 0;">Customer 7</span>
<span style="left:481.96px;top:616.38px;font-size:15.5px;line-height:15.5px;color:#1a1a1a;font-weight:400;transform:scaleX(1.0409);transform-origin:0 0;">17 995995821</span>
<span style="left:617.80px;top:616.88px;font-size:15.5px;line-height:15.5px;color:#2f6aa8;font-weight:400;transform:scaleX(1.0866);transform-origin:0 0;">cliente@client.com</span>
<span style="left:864.75px;top:616.38px;font-size:15.5px;line-height:15.5px;color:#1a1a1a;font-weight:400;transform:scaleX(1.0002);transform-origin:0 0;">First Street</span>
<span style="left:83.50px;top:661.10px;font-size:15px;line-height:15px;color:#3a3a3a;font-weight:700;">8</span>
<span style="left:83.50px;top:706.10px;font-size:15px;line-height:15px;color:#3a3a3a;font-weight:700;">9</span>
<span style="left:83.50px;top:751.10px;font-size:15px;line-height:15px;color:#3a3a3a;font-weight:700;">10</span>
<span style="left:83.50px;top:796.10px;font-size:15px;line-height:15px;color:#3a3a3a;font-weight:700;">11</span>
<span style="left:83.50px;top:841.10px;font-size:15px;line-height:15px;color:#3a3a3a;font-weight:700;">12</span>
<span style="left:83.50px;top:886.10px;font-size:15px;line-height:15px;color:#3a3a3a;font-weight:700;">13</span>
<span style="left:83.50px;top:931.10px;font-size:15px;line-height:15px;color:#3a3a3a;font-weight:700;">14</span>
<span style="left:83.50px;top:976.10px;font-size:15px;line-height:15px;color:#3a3a3a;font-weight:700;">15</span>
<span style="left:116.00px;top:1027.45px;font-size:16px;line-height:16px;color:#444444;font-weight:400;transform:scaleX(1.0039);transform-origin:0 0;">Cad_in</span>
<span style="left:193.00px;top:1027.45px;font-size:16px;line-height:16px;color:#444444;font-weight:400;transform:scaleX(1.0170);transform-origin:0 0;">Cad_pi</span>
<span style="left:271.00px;top:1027.45px;font-size:16px;line-height:16px;color:#444444;font-weight:400;transform:scaleX(0.9795);transform-origin:0 0;">Cad_be</span>
<span style="left:427.00px;top:1027.45px;font-size:16px;line-height:16px;color:#444444;font-weight:400;transform:scaleX(1.0154);transform-origin:0 0;">Cad_en</span>
<span style="left:509.00px;top:1027.45px;font-size:16px;line-height:16px;color:#444444;font-weight:400;transform:scaleX(1.0326);transform-origin:0 0;">Com_in</span>
<span style="left:592.00px;top:1027.45px;font-size:16px;line-height:16px;color:#444444;font-weight:400;transform:scaleX(1.0235);transform-origin:0 0;">Com_be</span>
<span style="left:678.96px;top:1027.45px;font-size:16px;line-height:16px;color:#444444;font-weight:400;transform:scaleX(1.0424);transform-origin:0 0;">Desp</span>
<span style="left:741.94px;top:1027.45px;font-size:16px;line-height:16px;color:#444444;font-weight:400;transform:scaleX(1.0607);transform-origin:0 0;">Mes</span>
<span style="left:799.00px;top:1027.45px;font-size:16px;line-height:16px;color:#444444;font-weight:400;transform:scaleX(0.9947);transform-origin:0 0;">Con_a</span>
<span style="left:870.00px;top:1027.45px;font-size:16px;line-height:16px;color:#444444;font-weight:400;transform:scaleX(1.0023);transform-origin:0 0;">Rel_g</span>
<span style="left:937.05px;top:1027.45px;font-size:16px;line-height:16px;color:#444444;font-weight:400;transform:scaleX(0.9534);transform-origin:0 0;">Rel_e</span>
<span style="left:1003.02px;top:1027.45px;font-size:16px;line-height:16px;color:#444444;font-weight:400;transform:scaleX(0.9754);transform-origin:0 0;">Rel_f</span>
<span style="left:1066.02px;top:1027.45px;font-size:16px;line-height:16px;color:#444444;font-weight:400;transform:scaleX(0.9815);transform-origin:0 0;">Rel_vp</span>
<span style="left:1142.02px;top:1027.45px;font-size:16px;line-height:16px;color:#444444;font-weight:400;transform:scaleX(0.9815);transform-origin:0 0;">Rel_vb</span>
<span style="left:1216.99px;top:1027.45px;font-size:16px;line-height:16px;color:#444444;font-weight:400;transform:scaleX(1.0141);transform-origin:0 0;">Dash_g</span>
<span style="left:1298.00px;top:1027.45px;font-size:16px;line-height:16px;color:#444444;font-weight:400;transform:scaleX(0.9950);transform-origin:0 0;">Dash_f</span>
<span style="left:1373.78px;top:1027.45px;font-size:16px;line-height:16px;color:#444444;font-weight:400;transform:scaleX(1.2222);transform-origin:0 0;">INI</span>
<span style="left:1420.94px;top:1027.45px;font-size:16px;line-height:16px;color:#444444;font-weight:400;transform:scaleX(1.0571);transform-origin:0 0;">DUV</span>
<span style="left:352.00px;top:1027.45px;font-size:16px;line-height:16px;color:#217346;font-weight:700;transform:scaleX(0.9803);transform-origin:0 0;">Cad_cl</span>
<span style="left:1482.80px;top:1027.45px;font-size:16px;line-height:16px;color:#444444;font-weight:400;transform:scaleX(0.7500);transform-origin:0 0;">S</span>
<span style="left:1499.90px;top:1027.45px;font-size:16px;line-height:16px;color:#111111;font-weight:400;transform:scaleX(1.1019);transform-origin:0 0;">...</span>
<span style="left:1885.40px;top:1061.04px;font-size:12px;line-height:12px;color:#333333;font-weight:400;transform:scaleX(0.9693);transform-origin:0 0;">90%</span>
</body></html>
